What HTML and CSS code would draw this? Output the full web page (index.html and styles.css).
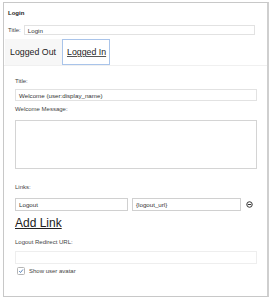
FILE: index.html
```html
<!DOCTYPE html>
<html>
<head>
<meta charset="utf-8">
<link rel="stylesheet" href="styles.css">
</head>
<body>
<div class="widget">
  <div class="widget-title">Login</div>
  <div class="title-row">
    <span class="lbl">Title:</span>
    <div class="input title-input">Login</div>
  </div>
  <div class="tabs">
    <div class="tab">Logged Out</div>
    <div class="tab active">Logged In</div>
  </div>
  <div class="panel">
    <div class="lbl">Title:</div>
    <div class="input welcome-title">Welcome (user:display_name)</div>
    <div class="lbl msg-lbl">Welcome Message:</div>
    <div class="textarea"></div>
    <div class="lbl links-lbl">Links:</div>
    <div class="link-row">
      <div class="input link-in">Logout</div>
      <div class="input link-in url">{logout_url}</div>
      <svg class="remove" width="7" height="7" viewBox="0 0 14 14"><circle cx="7" cy="7" r="5.5" fill="none" stroke="#333" stroke-width="2"/><rect x="3.5" y="6" width="7" height="2" fill="#333"/></svg>
    </div>
    <div class="add-link">Add Link</div>
    <div class="lbl redirect-lbl">Logout Redirect URL:</div>
    <div class="input empty"></div>
    <label class="check">
      <span class="box"><svg width="6" height="6" viewBox="0 0 10 10"><path d="M2 5.2 L4.2 7.5 L8.2 2.5" fill="none" stroke="#3a6fb0" stroke-width="1.4"/></svg></span>
      <span>Show user avatar</span>
    </label>
  </div>
</div>
</body>
</html>
```
FILE: styles.css
```css
html, body {
  margin: 0;
  padding: 0;
  background: #fff;
}
body {
  font-family: "Liberation Sans", Arial, sans-serif;
  color: #333;
  font-size: 6px;
}
.widget {
  margin: 2px 3px 0 3px;
  width: 266px;
  height: 295px;
  border: 1px solid #c8c8c8;
  border-right: 2px solid #cfcfcf;
  box-sizing: border-box;
  display: flex;
  flex-direction: column;
}
.widget-title {
  font-weight: bold;
  font-size: 6px;
  color: #222;
  padding: 7px 4px 0 4px;
  height: 14px;
  box-sizing: border-box;
}
.title-row {
  display: flex;
  align-items: center;
  gap: 3px;
  padding: 8px 0 0 4px;
}
.lbl {
  color: #444;
  font-size: 6px;
  line-height: 7px;
}
.input {
  border: 1px solid #e2e2e2;
  height: 12px;
  box-sizing: border-box;
  display: flex;
  align-items: center;
  padding: 0 3px;
  color: #333;
  font-size: 6.2px;
  background: #fff;
  flex-shrink: 0;
}
.title-input {
  width: 231px;
  height: 10px;
}
.tabs {
  display: flex;
  align-items: stretch;
  margin-top: 4px;
  height: 26px;
  border-bottom: 1px solid #f0f0f0;
  padding-left: 1px;
}
.tab {
  display: flex;
  align-items: center;
  padding: 0 5px 0 4px;
  font-size: 8.8px;
  color: #222;
  background: #f7f7f7;
  border: 1px solid transparent;
}
.tab.active {
  background: #fff;
  padding: 0 3px 0 4px;
  border-color: #a9c4ea;
  text-decoration: underline;
  text-decoration-color: #555;
}
.panel {
  padding: 12px 10px 0 11px;
  flex: 1;
  display: flex;
  flex-direction: column;
}
.welcome-title {
  margin-top: 4px;
}
.msg-lbl {
  margin-top: 5px;
}
.textarea {
  margin-top: 7px;
  height: 49px;
  border: 1px solid #d4d4d4;
  box-sizing: border-box;
}
.links-lbl {
  margin-top: 15px;
}
.link-row {
  margin-top: 7px;
  display: flex;
  align-items: center;
  gap: 4px;
}
.link-in {
  width: 113px;
  border-color: #d0d0d0;
  height: 13px;
}
.link-in.url {
  width: 109px;
}
.remove {
  margin-left: 1px;
}
.add-link {
  font-size: 12px;
  line-height: 14px;
  color: #222;
  text-decoration: underline;
  margin-top: 5px;
}
.redirect-lbl {
  margin-top: 9px;
}
.empty {
  margin-top: 5px;
  height: 13px;
  border-color: #eee;
}
.check {
  margin-top: 3px;
  display: flex;
  align-items: center;
  gap: 4px;
  padding-left: 2px;
  color: #444;
  font-size: 6px;
}
.box {
  width: 6px;
  height: 6px;
  border: 1px solid #b5b5b5;
  border-radius: 1.5px;
  display: flex;
  align-items: center;
  justify-content: center;
}
```
